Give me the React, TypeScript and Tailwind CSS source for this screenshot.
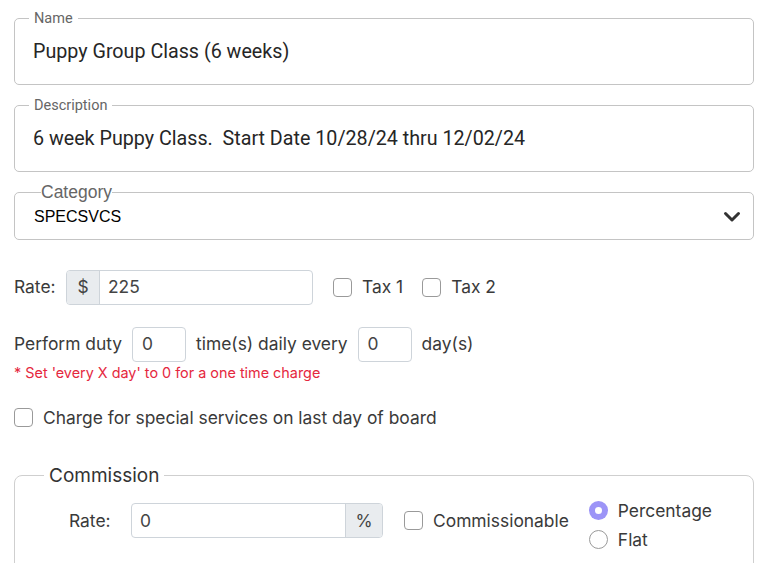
const ui = { fontFamily: "Inter, 'Liberation Sans', sans-serif" }
const mui = { fontFamily: "Roboto, 'Liberation Sans', sans-serif" }

function OutlinedField({ label, value }: { label: string; value: string }) {
  return (
    <div className="relative flex h-[67px] items-center rounded-[5px] border border-[#c4c4c4] px-[18px]" style={mui}>
      <span className="absolute -top-[9px] left-[14px] bg-white px-[5px] text-[14.5px] leading-[17px] text-[#666]">
        {label}
      </span>
      <span className="whitespace-pre text-[19.7px] text-[#262626]">{value}</span>
    </div>
  )
}

function Checkbox() {
  return <span className="inline-block h-[19px] w-[19px] shrink-0 rounded-[4px] border border-[#9a9a9a] bg-white" />
}

export default function App() {
  return (
    <div className="min-h-screen bg-white px-[14px] pt-[18px] text-[#3a3a3a]" style={ui}>
      <div className="w-[740px]">
        <OutlinedField label="Name" value="Puppy Group Class (6 weeks)" />
        <div className="mt-[20px]">
          <OutlinedField label="Description" value="6 week Puppy Class.  Start Date 10/28/24 thru 12/02/24" />
        </div>

        {/* Category select */}
        <div
          className="relative mt-[20px] flex h-[48px] items-center justify-between rounded-[5px] border border-[#c4c4c4] pl-[19px] pr-[12px]"
          style={{ fontFamily: "'Liberation Sans', Arial, sans-serif" }}
        >
          <span className="absolute -top-[11px] left-[26px] bg-white text-[17.5px] leading-[20px] text-[#666]">Category</span>
          <span className="pt-[2px] text-[16px] text-black">SPECSVCS</span>
          <svg width="18" height="12" viewBox="0 0 18 12" className="mt-[2px]">
            <polyline points="2.5,2.5 9,9 15.5,2.5" fill="none" stroke="#333" strokeWidth="3" strokeLinecap="round" strokeLinejoin="round" />
          </svg>
        </div>

        {/* Rate row */}
        <div className="mt-[30px] flex items-center text-[17.4px]">
          <span className="w-[52px]">Rate:</span>
          <div className="flex h-[35px] w-[247px] overflow-hidden rounded-[4px] border border-[#ced4da]">
            <span className="flex w-[33px] items-center justify-center border-r border-[#ced4da] bg-[#e9ecef] text-[#444]">$</span>
            <span className="flex items-center pl-[8px] text-[#444]">225</span>
          </div>
          <label className="ml-[20px] flex items-center gap-[10px]">
            <Checkbox />
            <span>Tax 1</span>
          </label>
          <label className="ml-[19px] flex items-center gap-[10px]">
            <Checkbox />
            <span>Tax 2</span>
          </label>
        </div>

        {/* Perform duty row */}
        <div className="mt-[22px] flex items-center text-[17.4px]">
          <span>Perform duty</span>
          <span className="mx-[10px] flex h-[35px] w-[54px] items-center rounded-[4px] border border-[#ced4da] pl-[9px] text-[#444]">0</span>
          <span>time(s) daily every</span>
          <span className="mx-[10px] flex h-[35px] w-[54px] items-center rounded-[4px] border border-[#ced4da] pl-[9px] text-[#444]">0</span>
          <span>day(s)</span>
        </div>
        <div className="text-[14.4px] text-[#e5283e]">* Set 'every X day' to 0 for a one time charge</div>

        <label className="mt-[21px] flex items-center gap-[10px] text-[17.4px]">
          <Checkbox />
          <span>Charge for special services on last day of board</span>
        </label>

        {/* Commission */}
        <fieldset className="mt-[33px] h-[110px] rounded-[8px] border border-[#cfcfcf] px-[20px]">
          <legend className="ml-[9px] px-[5px] text-[19px] leading-[23px] text-[#333]">Commission</legend>
          <div className="mt-[2px] flex items-center text-[17.4px]">
            <span className="w-[96px] pl-[34px]">Rate:</span>
            <div className="flex h-[35px] w-[252px] overflow-hidden rounded-[4px] border border-[#ced4da]">
              <span className="flex flex-1 items-center pl-[8px] text-[#444]">0</span>
              <span className="flex w-[37px] items-center justify-center border-l border-[#ced4da] bg-[#e9ecef] text-[#444]">%</span>
            </div>
            <label className="ml-[21px] flex items-center gap-[10px]">
              <Checkbox />
              <span>Commissionable</span>
            </label>
            <div className="ml-[20px] flex flex-col gap-[3px] pt-[9px]">
              <label className="flex items-center gap-[10px]">
                <span className="flex h-[19px] w-[19px] items-center justify-center rounded-full bg-[#9c94f7]">
                  <span className="h-[7px] w-[7px] rounded-full bg-white" />
                </span>
                <span>Percentage</span>
              </label>
              <label className="flex items-center gap-[10px]">
                <span className="h-[19px] w-[19px] rounded-full border border-[#9a9a9a]" />
                <span>Flat</span>
              </label>
            </div>
          </div>
        </fieldset>
      </div>
    </div>
  )
}
